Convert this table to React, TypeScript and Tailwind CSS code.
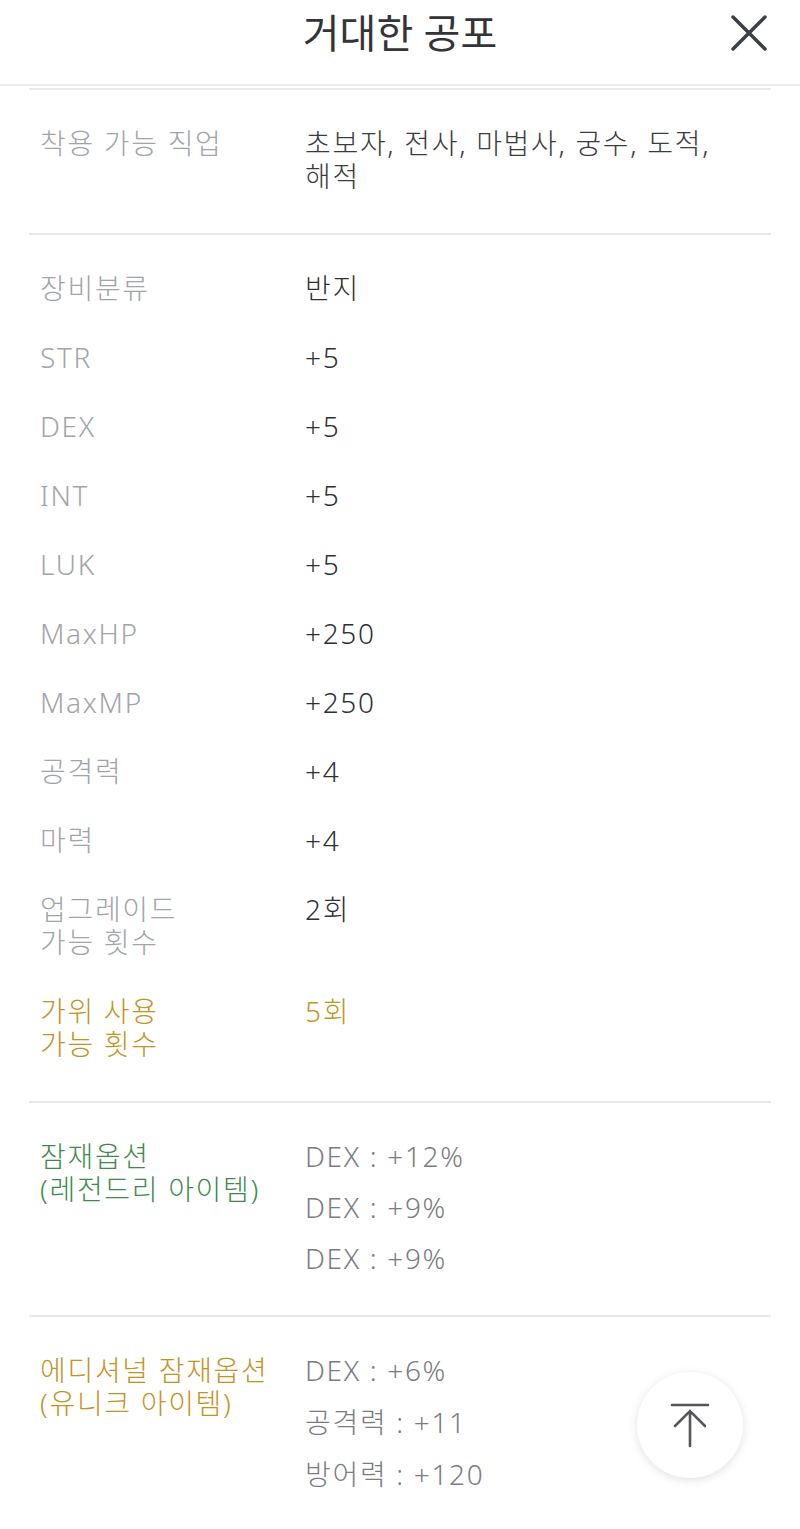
const FONT = { fontFamily: '"Noto Sans", "Noto Sans CJK KR", sans-serif' };

type Row = { label: string[]; value: string[]; tone?: 'gold' };

const STATS: Row[] = [
  { label: ['장비분류'], value: ['반지'] },
  { label: ['STR'], value: ['+5'] },
  { label: ['DEX'], value: ['+5'] },
  { label: ['INT'], value: ['+5'] },
  { label: ['LUK'], value: ['+5'] },
  { label: ['MaxHP'], value: ['+250'] },
  { label: ['MaxMP'], value: ['+250'] },
  { label: ['공격력'], value: ['+4'] },
  { label: ['마력'], value: ['+4'] },
  { label: ['업그레이드', '가능 횟수'], value: ['2회'] },
  { label: ['가위 사용', '가능 횟수'], value: ['5회'], tone: 'gold' },
];

function Lines({ lines, className }: { lines: string[]; className: string }) {
  return (
    <div className={className}>
      {lines.map((l) => (
        <div key={l}>{l}</div>
      ))}
    </div>
  );
}

function Section({ children, last }: { children: React.ReactNode; last?: boolean }) {
  return (
    <section className={`border-t-2 border-[#e8e8e8] pt-[37px] pb-[40px] pl-[11px] ${last ? 'border-b-2' : ''}`}>
      {children}
    </section>
  );
}

export default function App() {
  return (
    <div className="min-h-[1529px] bg-white text-[28px] leading-[33px] font-light tracking-[0.06em]" style={FONT}>
      <header className="grid h-[86px] grid-cols-[1fr_auto_1fr] border-b-2 border-[#ececec]">
        <div />
        <h1 className="pt-[8px] text-[40px] leading-[50px] font-normal tracking-normal text-[#333438]">거대한 공포</h1>
        <div className="flex justify-end pt-[15px] pr-[33px]">
          <svg width="36" height="36" viewBox="0 0 36 36" fill="none" stroke="#3c3f46" strokeWidth="3.5" strokeLinecap="round">
            <path d="M2 2 L34 34 M34 2 L2 34" />
          </svg>
        </div>
      </header>

      <main className="mx-[29px] mt-[2px]">
        <Section>
          <div className="grid grid-cols-[265px_1fr]">
            <div className="text-[#a1a4ab]">착용 가능 직업</div>
            <div className="text-[#3a3b3e]">
              초보자, 전사, 마법사, 궁수, 도적,
              <br />
              해적
            </div>
          </div>
        </Section>

        <Section>
          <div className="flex flex-col gap-[36px]">
            {STATS.map((r) => (
              <div key={r.label.join()} className="grid grid-cols-[265px_1fr]">
                <Lines lines={r.label} className={r.tone ? 'text-[#c4931f]' : 'text-[#a1a4ab]'} />
                <Lines lines={r.value} className={r.tone ? 'text-[#c4931f]' : 'text-[#2f3034]'} />
              </div>
            ))}
          </div>
        </Section>

        <Section>
          <div className="grid grid-cols-[265px_1fr]">
            <Lines lines={['잠재옵션', '(레전드리 아이템)']} className="text-[#3d8a4f]" />
            <div className="flex flex-col gap-[18px] text-[#7b7c7f]">
              <div>DEX : +12%</div>
              <div>DEX : +9%</div>
              <div>DEX : +9%</div>
            </div>
          </div>
        </Section>

        <Section last>
          <div className="grid grid-cols-[265px_1fr]">
            <Lines lines={['에디셔널 잠재옵션', '(유니크 아이템)']} className="text-[#c4931f]" />
            <div className="flex flex-col gap-[19px] text-[#7b7c7f]">
              <div>DEX : +6%</div>
              <div>공격력 : +11</div>
              <div>방어력 : +120</div>
            </div>
          </div>
        </Section>
      </main>

      <button className="fixed right-[57px] bottom-[51px] flex h-[106px] w-[106px] items-center justify-center rounded-full bg-white shadow-[0_2px_10px_rgba(0,0,0,0.12)]">
        <svg width="40" height="46" viewBox="0 0 40 46" fill="none" stroke="#555659" strokeWidth="2.6" strokeLinecap="round">
          <path d="M2 3 H38 M20 9 V44 M5 24 L20 9 L35 24" />
        </svg>
      </button>
    </div>
  );
}
